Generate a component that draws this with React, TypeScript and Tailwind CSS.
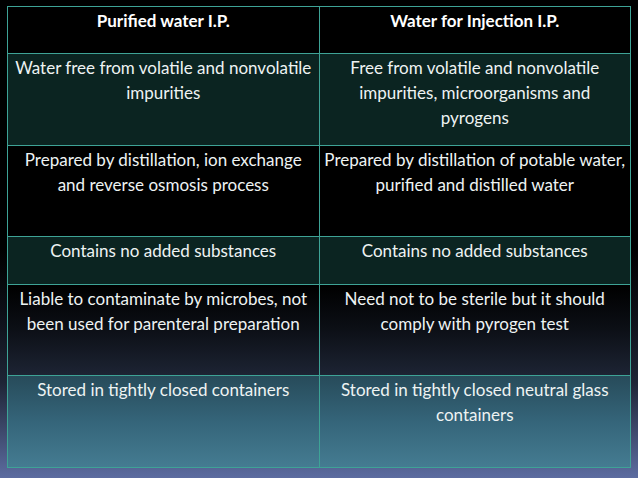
const rows: { left: string[]; right: string[]; h: string; bg: string }[] = [
  {
    left: ["Water free from volatile and nonvolatile", "impurities"],
    right: ["Free from volatile and nonvolatile", "impurities, microorganisms and", "pyrogens"],
    h: "h-[92px]",
    bg: "bg-[#0b2421]",
  },
  {
    left: ["Prepared by distillation, ion exchange", "and reverse osmosis process"],
    right: ["Prepared by distillation of potable water,", "purified and distilled water"],
    h: "h-[91px]",
    bg: "bg-black",
  },
  {
    left: ["Contains no added substances"],
    right: ["Contains no added substances"],
    h: "h-[48px]",
    bg: "bg-[#0b2421]",
  },
  {
    left: ["Liable to contaminate by microbes, not", "been used for parenteral preparation"],
    right: ["Need not to be sterile but it should", "comply with pyrogen test"],
    h: "h-[91px]",
    bg: "bg-[linear-gradient(to_bottom,#000000,#0b0e14_45%,#1d2434)]",
  },
  {
    left: ["Stored in tightly closed containers"],
    right: ["Stored in tightly closed neutral glass", "containers"],
    h: "h-[92px]",
    bg: "bg-[linear-gradient(to_bottom,#274b5a,#35657a_50%,#457c92)]",
  },
];

function Cell({ lines, bold }: { lines: string[]; bold?: boolean }) {
  return (
    <div
      className={`flex flex-col items-center border-r border-b border-[#3ea396] pt-px text-[17px] leading-[25px] ${
        bold ? "font-bold text-white" : "text-[#eef3f3]"
      }`}
    >
      {lines.map((l) => (
        <span key={l} className="whitespace-nowrap">
          {l}
        </span>
      ))}
    </div>
  );
}

export default function App() {
  return (
    <div
      className="h-[478px] w-full overflow-hidden bg-[linear-gradient(to_bottom,#000000_0%,#000000_52%,#0d1018_66%,#1e2536_80%,#5c6ca0_100%)] pt-[6px] pl-[7px]"
      style={{ fontFamily: "Lato, 'Open Sans', sans-serif" }}
    >
      <div className="w-[624px] border-t border-l border-[#3ea396]">
        <div className="grid h-[47px] grid-cols-2 bg-black">
          <Cell lines={["Purified water I.P."]} bold />
          <Cell lines={["Water for Injection I.P."]} bold />
        </div>
        {rows.map((r) => (
          <div key={r.left[0]} className={`grid grid-cols-2 ${r.h} ${r.bg}`}>
            <Cell lines={r.left} />
            <Cell lines={r.right} />
          </div>
        ))}
      </div>
    </div>
  );
}
